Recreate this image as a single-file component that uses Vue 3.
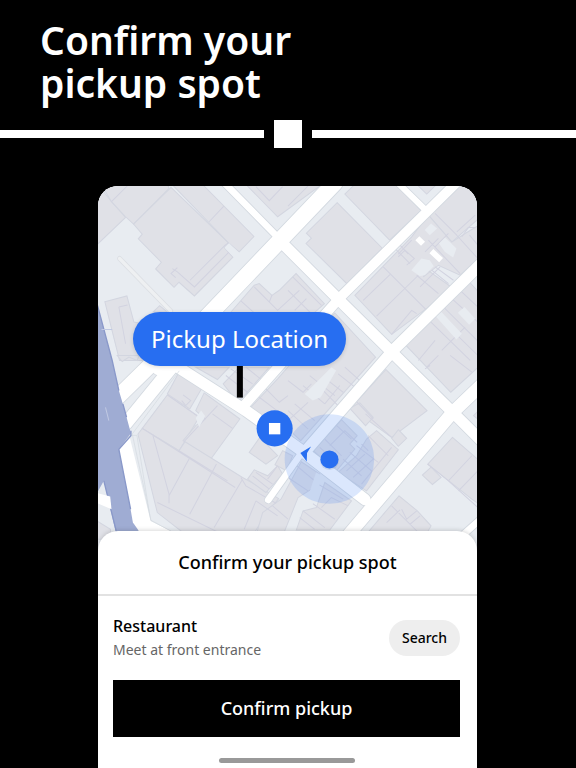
<script setup>
import { ref } from 'vue'

const place = ref({
  name: 'Restaurant',
  note: 'Meet at front entrance'
})

// road centre lines, w is the road width in map units
const roads = [
  { d: 'M715 10L190 560', w: 48 },
  { d: 'M160 558L66 650', w: 46 },
  { d: 'M232 556L90 730', w: 38 },
  { d: 'M385 8L552 178', w: 20 },
  { d: 'M552 182L733 363L1090 716L1160 786', w: 33 },
  { d: 'M904 8L990 92', w: 18 },
  { d: 'M1080 8L733 350L440 680', w: 29 },
  { d: 'M1160 244L892 508L628 812', w: 34 },
  { d: 'M620 812L517 957', w: 20 },
  { d: 'M1160 608L1068 696L750 1070L720 1110', w: 38 },
  { d: 'M240 556L450 690L620 812L806 956', w: 34 },
  { d: 'M1160 1008L1090 1070', w: 20 }
]

// building outlines, grouped by quarter of the map
const quarters = [
  {
    x: 0,
    y: 0,
    blocks: [
      'M0 10V198L90 112L48 65L20 30Z',
      'M15 10L48 65L90 110L114 132L220 25L215 10Z',
      'M226 22L114 132L140 162L128 176L197 246L180 266L235 321L250 306L296 347L411 231L385 202L398 188Z',
      'M226 10L398 188L430 215L474 169L317 10Z',
      'M447 10L545 110L682 10Z',
      'M28 364L94 347L115 425L140 430V540H72Z',
      'M172 395L192 376L215 395Z',
      'M375 430L475 315L490 310L528 345L550 330L600 280L685 370L640 410H380Z'
    ]
  },
  {
    x: 576,
    y: 0,
    blocks: [
      'M170 42L203 10H322L398 92L304 180Z',
      'M147 68L282 204L177 311L54 190L70 174L55 159Z',
      'M382 10L415 42L448 10Z',
      'M420 105L518 10H580V107L490 186Z',
      'M200 345L370 170L385 150L420 105L490 186L530 160L580 130V225L515 285L450 255L405 290L415 268L495 325L310 462Z',
      'M353 495L545 308L580 345V550L487 635Z'
    ]
  },
  {
    x: 0,
    y: 525,
    blocks: [
      'M65 0L80 18L100 5L125 15L130 0Z',
      'M250 50L320 95L282 160L215 115Z',
      'M215 118L310 185L250 285L140 218Z',
      'M325 112L432 190L345 310L262 255L300 210L328 190L300 165Z',
      'M140 218L250 285L268 258L440 365L485 390L548 428L500 490L470 540H275L185 470L127 235Z',
      'M300 35H400L365 72Z',
      'M382 85L430 35H520L450 115L425 140Z',
      'M465 155L545 70L716 -127L838 5L614 255L540 185L495 195Z',
      'M460 290L492 245L545 300L510 325Z',
      'M455 370L475 342L515 360L545 330L560 355L510 410Z',
      'M537 327L560 285L590 300L572 345Z',
      'M-4 490L45 520V550H-4Z',
      'M500 470L555 430L616 318L671 355L646 400L606 425L560 540H480Z'
    ]
  },
  {
    x: 576,
    y: 525,
    blocks: [
      'M293 42L416 165L310 245L185 155L205 138Z',
      'M185 158L215 142L255 185L232 210Z',
      'M330 222L355 248L330 272L310 248Z',
      'M75 285L160 192L207 240L185 265L200 280L145 345Z',
      'M150 350L205 300L235 250L265 225L330 282L235 405Z',
      'M492 245L580 321V450L550 430L418 325Z',
      'M428 334L458 365L432 386L402 358Z',
      'M110 380L190 435L125 522H25L45 465L85 455Z',
      'M332 420L387 465L428 510L410 540H230Z',
      'M555 180L580 155V200Z'
    ]
  }
]

// walls between neighbouring buildings
const walls = [
  {
    x: 0,
    y: 0,
    lines:
      'M48 65L95 18M340 125L384 78M230 265L245 275L296 320L400 215M245 262L226 280L240 292M283 300L388 195L398 188M70 380L96 374M70 380L90 490M435 362L500 420M475 320L545 390L610 330M528 345L520 365M480 20L520 62L560 20'
  },
  {
    x: 576,
    y: 0,
    lines:
      'M0 78L60 18M0 330L70 400M14 290L100 375M20 390L55 355M225 360L305 283M285 260L425 400M265 407L390 285M310 462L370 390L385 400M320 205L365 250M330 222L370 180M330 230L350 210L378 235L355 255M335 195L360 222M395 320L455 260M385 285L450 340M440 100L505 165M505 155L560 105M500 160L568 235M520 170L540 142H560M420 180L515 280M440 200L480 160M440 260L495 300M430 270L480 310M420 418L545 540M440 400L568 525M465 380L568 482M490 355L568 425M515 330L568 380M460 510L530 440M390 540L440 480M410 215L450 175M543 165L568 195'
  },
  {
    x: 0,
    y: 525,
    lines:
      'M215 118L305 180M140 218L418 395M172 240L220 415L220 442M220 420L280 310M282 475L362 325M355 515L440 370M185 440L390 540M365 150L265 258M350 175L410 218M250 285L395 375M262 118L285 135L270 150L258 135M435 365L450 390L540 442M480 435L445 520M480 435L545 480M390 60L455 110M405 40L470 85M450 35L500 75M510 100L550 140L576 120M490 125L550 170M480 350L530 385M545 330L515 370M470 360L520 400M530 450L576 490'
  },
  {
    x: 576,
    y: 525,
    lines:
      'M0 165L60 220M20 145L80 195M45 90L110 145M65 60L140 120M95 95L155 155M120 75L165 110M150 55L200 95M170 35L215 75M0 75L45 110L70 85M0 195L60 140M110 145L155 90M205 138L255 190M232 175L310 245M410 40L425 30M415 35L450 0M485 0L550 50M125 270L170 225L207 260M110 250L160 300M140 205L190 250M95 275L150 325M165 310L220 360M185 290L250 345M205 270L270 320M240 240L300 300M220 265L240 285M175 345L230 295M195 365L255 310M220 385L310 275M418 325L480 375L550 300M510 405L568 345M480 375L568 455M20 325L80 375M0 365L60 405M90 385L165 430M70 440L140 490M45 465L110 515M100 455L130 425L180 450M35 485L80 520M310 450L400 540M335 462L295 500M340 460L355 490L385 465M365 505L395 480'
  }
]

// light gaps and courtyards
const yards = [
  'M985 150L1004 130L1022 145L1000 165Z',
  'M945 270L975 235L1000 240L1012 258L985 285L970 287Z',
  'M1028 190L1046 172L1080 205L1070 232L1045 215Z',
  'M1015 405L1035 395L1096 460L1080 477Z',
  'M1084 397L1104 380L1136 415L1118 433Z',
  'M386 203L400 189L425 214L412 229Z',
  'M300 712L316 690L328 706L310 740Z',
  'M626 640L706 560L720 570L674 650L650 660Z',
  'M660 875L680 885L650 970L630 965Z'
]
</script>

<template>
  <main class="page">
    <h1 class="headline">Confirm your<br />pickup spot</h1>

    <div class="divider" aria-hidden="true">
      <span class="bar"></span>
      <span class="square"></span>
      <span class="bar"></span>
    </div>

    <section class="phone">
      <div class="map">
        <svg class="canvas" viewBox="6 18 1137 1092" preserveAspectRatio="xMidYMin slice">
          <rect x="0" y="0" width="1160" height="1120" fill="#e8ecf1" />

          <g v-for="(q, i) in quarters" :key="'q' + i" :transform="`translate(${q.x} ${q.y})`">
            <path v-for="(b, n) in q.blocks" :key="n" class="block" :d="b" />
          </g>
          <g v-for="(q, i) in walls" :key="'w' + i" :transform="`translate(${q.x} ${q.y})`">
            <path class="wall" :d="q.lines" />
          </g>
          <path v-for="(y, i) in yards" :key="'y' + i" class="yard" :d="y" />
          <path class="gap" d="M963 174L980 191M1005 213L1034 240" />
          <path class="lane-edge" d="M72 235L225 392" />
          <path class="lane" d="M72 235L225 392" />

          <path
            v-for="(r, i) in roads"
            :key="'e' + i"
            class="edge"
            :d="r.d"
            :stroke-width="r.w + 5"
          />
          <path class="quay" d="M66 806L104 764L124 764L165 1020L228 1052H245V1110H120Z" />
          <path v-for="(r, i) in roads" :key="'r' + i" class="road" :d="r.d" :stroke-width="r.w" />
          <path d="M70 805L102 768L165 1020L225 1050V1110H130Z" fill="#fff" />
          <path d="M250 572L110 760L166 1018L225 1050" class="edge" stroke-width="2" />

          <path
            d="M0 360L6 375L50 540L70 630L82 670L93 710L106 758L70 806L104 980L130 1050L140 1080V1110H82L60 1050L25 900L0 945Z"
            fill="#9facd3"
          />
          <path
            d="M6 375L50 540L70 630M82 670L93 710M106 750V765L70 806L105 985M25 900L62 1050"
            fill="none"
            stroke="#8998c9"
            stroke-width="4"
          />
          <path d="M0 935L44 947L48 985L0 965Z" fill="#fff" />
          <path d="M18 447H50M30 680L40 720" stroke="#c0c9e3" stroke-width="3" />
          <path d="M105 985L125 1000L140 1050H130L112 1025Z" fill="#fff" />

          <circle cx="700" cy="835" r="134" fill="#276ef1" fill-opacity="0.17" />
          <circle cx="700" cy="840" r="28" fill="#1c3f85" fill-opacity="0.12" />
          <circle cx="700" cy="836" r="27" fill="#276ef1" />
          <path d="M613 817L645 797L633 817L632 842Z" fill="#276ef1" />

          <rect x="423" y="540" width="18" height="111" fill="#000" />
          <circle cx="536" cy="743" r="54" fill="#276ef1" />
          <rect x="519" y="727" width="34" height="34" fill="#fff" />
        </svg>
        <span class="label">Pickup Location</span>
      </div>

      <div class="sheet">
        <h2 class="title">Confirm your pickup spot</h2>
        <div class="content">
          <div class="place">
            <div>
              <p class="name">{{ place.name }}</p>
              <p class="note">{{ place.note }}</p>
            </div>
            <button type="button" class="search">Search</button>
          </div>
          <button type="button" class="confirm">Confirm pickup</button>
          <div class="home"></div>
        </div>
      </div>
    </section>
  </main>
</template>

<style>
body {
  background: #000;
}
</style>

<style scoped>
.page {
  display: flex;
  flex-direction: column;
  min-height: 100vh;
  background: #000;
  font-family: 'Noto Sans', 'Open Sans', sans-serif;
  font-variant-ligatures: none;
  color: #000;
}
.headline {
  margin: 0;
  padding: 18px 40px 0;
  font-size: 39px;
  line-height: 43px;
  font-weight: 600;
  color: #fff;
}
.divider {
  display: flex;
  align-items: center;
  gap: 10px;
  margin: 16px 0 38px;
}
.bar {
  flex: 1;
  height: 8px;
  background: #fff;
}
.square {
  width: 28px;
  height: 28px;
  background: #fff;
}
.phone {
  display: flex;
  flex: 1;
  flex-direction: column;
  margin: 0 99px 0 98px;
  border-radius: 20px 20px 0 0;
  overflow: hidden;
}
.map {
  position: relative;
  flex: 1;
  min-height: 364px;
  background: #e8ecf1;
}
.canvas {
  position: absolute;
  inset: 0;
  width: 100%;
  height: 100%;
}
.block {
  fill: #e0e1e7;
  stroke: #d3d6e0;
  stroke-width: 3;
}
.wall {
  fill: none;
  stroke: #d2d3e0;
  stroke-width: 3;
}
.yard {
  fill: #e8ecf1;
}
.gap {
  stroke: #fff;
  stroke-width: 17;
}
.lane-edge,
.lane {
  fill: none;
  stroke: #dcdfe4;
  stroke-width: 15;
  stroke-linecap: round;
}
.lane {
  stroke: #eef0f2;
  stroke-width: 10;
}
.edge {
  fill: none;
  stroke: #d3d9e0;
  stroke-linecap: round;
}
.road {
  fill: none;
  stroke: #fff;
  stroke-linecap: round;
}
.quay {
  fill: #e8ecf1;
  stroke: #d3d9e0;
  stroke-width: 2;
}
.label {
  position: absolute;
  top: 126px;
  left: 35px;
  padding: 0 18px;
  border-radius: 27px;
  background: #276ef1;
  box-shadow: 0 1px 4px rgba(0, 0, 0, 0.15);
  font-size: 24px;
  line-height: 54px;
  white-space: nowrap;
  color: #fff;
}
.sheet {
  position: relative;
  margin-top: -20px;
  border-radius: 20px 20px 0 0;
  background: #fff;
  box-shadow: 0 -1px 4px rgba(0, 0, 0, 0.15);
}
.title {
  margin: 0;
  border-bottom: 2px solid #e2e2e2;
  font-size: 18px;
  line-height: 63px;
  font-weight: 500;
  text-align: center;
}
.content {
  padding: 18px 17px 5px 15px;
}
.place {
  display: flex;
  align-items: center;
  justify-content: space-between;
}
.name,
.note {
  margin: 0;
  font-size: 16px;
  line-height: 24px;
  font-weight: 500;
}
.note {
  font-size: 14px;
  font-weight: 400;
  color: #666;
}
.search,
.confirm {
  border: 0;
  font-family: inherit;
  font-weight: 500;
  cursor: pointer;
}
.search {
  padding: 0 13px;
  border-radius: 18px;
  background: #eee;
  font-size: 14px;
  line-height: 36px;
  color: #000;
}
.confirm {
  display: block;
  width: 100%;
  margin: 18px 0 21px;
  padding: 0;
  background: #000;
  font-size: 18px;
  line-height: 57px;
  color: #fff;
}
.home {
  width: 136px;
  height: 5px;
  margin: 0 auto;
  border-radius: 3px;
  background: #999;
}
</style>
